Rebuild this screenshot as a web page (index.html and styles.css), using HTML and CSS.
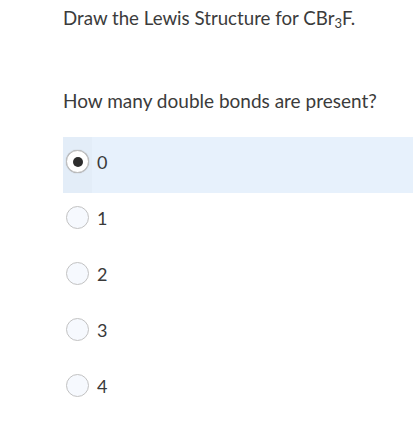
FILE: index.html
```html
<!DOCTYPE html>
<html>
<head>
<meta charset="utf-8">
<link rel="stylesheet" href="styles.css">
</head>
<body>
<div class="question">
  <p class="title">Draw the Lewis Structure for CBr<sub>3</sub>F.</p>
  <p class="prompt">How many double bonds are present?</p>
  <ul class="options">
    <li class="option selected"><span class="radio"></span><span class="label">0</span></li>
    <li class="option"><span class="radio"></span><span class="label">1</span></li>
    <li class="option"><span class="radio"></span><span class="label">2</span></li>
    <li class="option"><span class="radio"></span><span class="label">3</span></li>
    <li class="option"><span class="radio"></span><span class="label">4</span></li>
  </ul>
</div>
</body>
</html>
```
FILE: styles.css
```css
html, body {
  margin: 0;
  padding: 0;
  background: #fff;
}
body {
  font-family: Lato, "Open Sans", sans-serif;
  color: #3b3b3b;
}
.question {
  padding: 6px 0 0 63px;
}
.title {
  margin: 0;
  font-size: 18.7px;
  line-height: 24px;
}
.title sub {
  font-size: 13px;
  vertical-align: -3px;
  line-height: 0;
}
.prompt {
  margin: 59px 0 0;
  font-size: 19px;
  line-height: 24px;
}
.options {
  list-style: none;
  margin: 24px 0 0;
  padding: 0;
}
.option {
  display: flex;
  align-items: center;
  height: 56px;
  padding: 0 0 7px 3px;
  box-sizing: border-box;
  gap: 8px;
}
.option.selected {
  background: linear-gradient(to right, #e3edf8 0, #e3edf8 29px, #e7f1fc 29px);
}
.radio {
  width: 23px;
  height: 23px;
  border-radius: 50%;
  border: 1.5px solid #c2c2c2;
  background: #f6f9fe;
  box-sizing: border-box;
  position: relative;
}
.selected .radio {
  background: #fff;
  border-color: #bdbdbd;
  box-shadow: 0 0 1px #999;
}
.selected .radio::after {
  content: "";
  position: absolute;
  left: 50%;
  top: 50%;
  width: 10px;
  height: 10px;
  margin: -5px 0 0 -5px;
  border-radius: 50%;
  background: #2d2d2d;
}
.label {
  font-size: 18px;
  color: #3a3a3a;
}
```
